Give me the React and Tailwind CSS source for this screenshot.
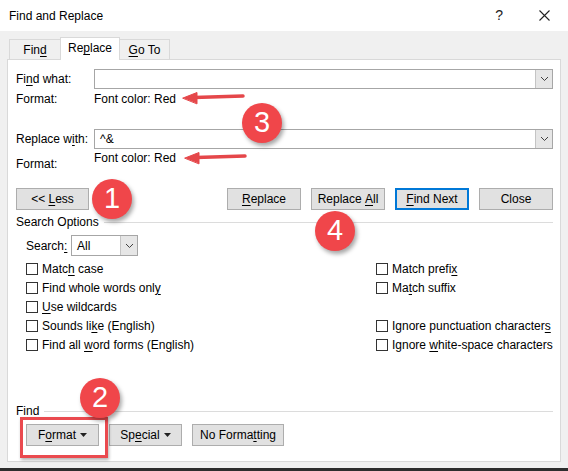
import React from "react";

const font = { fontFamily: '"Liberation Sans", Arial, sans-serif' };

const U = ({ children }) => <span className="underline underline-offset-2">{children}</span>;

const Chevron = () => (
  <svg width="9" height="6" viewBox="0 0 9 6" fill="none">
    <path d="M1 1 L4.5 4.5 L8 1" stroke="#404040" strokeWidth="1" />
  </svg>
);

const Combo = ({ value, className = "" }) => (
  <div className={`flex h-[20px] border border-[#a6a6a6] bg-white ${className}`}>
    <div className="flex flex-1 items-center pl-[5px] leading-none">{value}</div>
    <div className="flex w-[17px] items-center justify-center border-l border-[#c4c4c4] bg-[#e6e6e6]">
      <Chevron />
    </div>
  </div>
);

const Button = ({ children, className = "w-[74px]", primary }) => (
  <div
    className={`flex h-[22px] items-center justify-center bg-[#e1e1e1] ${
      primary ? "border-2 border-[#0078d7]" : "border border-[#adadad]"
    } ${className}`}
  >
    <span className="flex items-center whitespace-pre">{children}</span>
  </div>
);

const Check = ({ children }) => (
  <div className="flex h-[19px] items-center gap-[4px]">
    <div className="h-[12px] w-[12px] border border-[#333] bg-white" />
    <span>{children}</span>
  </div>
);

const Caret = () => (
  <svg width="7" height="4" viewBox="0 0 7 4" className="ml-[4px]">
    <path d="M0 0 L7 0 L3.5 4 Z" fill="#222" />
  </svg>
);

const Badge = ({ n, className }) => (
  <div
    className={`absolute flex h-[40px] w-[40px] items-center justify-center rounded-full bg-[#f0464a] text-[29px] text-white shadow-[2px_3px_4px_rgba(0,0,0,0.35)] ${className}`}
    style={font}
  >
    {n}
  </div>
);

export default function App() {
  return (
    <div
      className="relative flex h-[471px] w-[568px] flex-col overflow-hidden border-b-[3px] border-[#2d2d2d] bg-[#f0f0f0] text-[12px] text-black"
      style={font}
    >
      {/* title bar */}
      <div className="flex h-[31px] items-center bg-white pl-[9px]">
        <span className="text-[12px]">Find and Replace</span>
        <span className="ml-auto mr-[36px] text-[14px] text-[#222]">?</span>
        <svg width="11" height="11" viewBox="0 0 11 11" className="mr-[18px]">
          <path d="M0.5 0.5 L10.5 10.5 M10.5 0.5 L0.5 10.5" stroke="#222" strokeWidth="1.1" />
        </svg>
      </div>

      {/* tabs */}
      <div className="flex h-[28px] items-end pl-[9px]">
        <div className="flex h-[20px] w-[51px] items-center justify-center border border-b-0 border-r-0 border-[#d9d9d9]">
          <span>
            Fin<U>d</U>
          </span>
        </div>
        <div className="relative z-10 -mb-px flex h-[23px] w-[60px] items-center justify-center border border-b-0 border-[#d9d9d9] bg-white pb-[2px]">
          <span>
            Re<U>p</U>lace
          </span>
        </div>
        <div className="flex h-[20px] w-[50px] items-center justify-center border border-b-0 border-l-0 border-[#d9d9d9]">
          <span>
            <U>G</U>o To
          </span>
        </div>
      </div>

      {/* panel */}
      <div className="mx-[7px] flex h-[403px] flex-col border border-[#d9d9d9] bg-white pl-[8px] pr-[7px]">
        <div className="mt-[9px] flex h-[20px] items-center">
          <span className="w-[78px]">
            Fi<U>n</U>d what:
          </span>
          <Combo className="flex-1" />
        </div>
        <div className="flex h-[20px] items-center">
          <span className="w-[78px]">Format:</span>
          <span>Font color: Red</span>
        </div>

        <div className="mt-[20px] flex h-[20px] items-center">
          <span className="w-[78px]">
            Replace w<U>i</U>th:
          </span>
          <Combo className="flex-1" value="^&" />
        </div>
        <div className="mt-[1px] flex items-start leading-[16px]">
          <span className="w-[78px] pt-[6px]">Format:</span>
          <span>Font color: Red</span>
        </div>

        <div className="mt-[16px] flex items-center">
          <Button className="w-[73px]">
            {"<< "}
            <U>L</U>ess
          </Button>
          <div className="ml-auto flex gap-[10px]">
            <Button>
              <U>R</U>eplace
            </Button>
            <Button>
              {"Replace "}
              <U>A</U>ll
            </Button>
            <Button primary>
              <U>F</U>ind Next
            </Button>
            <Button>Close</Button>
          </div>
        </div>

        <div className="mt-[4px] flex h-[16px] items-center">
          <span>Search Options</span>
          <div className="ml-[5px] h-px flex-1 bg-[#dcdcdc]" />
        </div>

        <div className="mt-[5px] flex items-center pl-[10px]">
          <span className="w-[45px]">
            Search<U>:</U>
          </span>
          <Combo className="h-[21px] w-[67px]" value="All" />
        </div>

        <div className="mt-[3px] grid grid-cols-[350px_1fr] pl-[10px]">
          <div className="flex flex-col">
            <Check>
              Matc<U>h</U> case
            </Check>
            <Check>
              Find whole words onl<U>y</U>
            </Check>
            <Check>
              <U>U</U>se wildcards
            </Check>
            <Check>
              Sounds li<U>k</U>e (English)
            </Check>
            <Check>
              Find all <U>w</U>ord forms (English)
            </Check>
          </div>
          <div className="flex flex-col">
            <Check>
              Match prefi<U>x</U>
            </Check>
            <Check>
              Ma<U>t</U>ch suffix
            </Check>
            <div className="h-[19px]" />
            <Check>
              Ignore punctuation character<U>s</U>
            </Check>
            <Check>
              Ignore <U>w</U>hite-space characters
            </Check>
          </div>
        </div>

        <div className="mt-[49px] flex h-[16px] items-center">
          <span>Find</span>
          <div className="ml-[5px] h-px flex-1 bg-[#dcdcdc]" />
        </div>

        <div className="mt-[5px] flex items-center gap-[10px] pl-[10px]">
          <Button className="h-[21px] w-[73px]">
            F<U>o</U>rmat
            <Caret />
          </Button>
          <Button className="h-[21px] w-[73px]">
            Sp<U>e</U>cial
            <Caret />
          </Button>
          <Button className="h-[21px] w-[92px]">
            No Forma<U>t</U>ting
          </Button>
        </div>
      </div>

      {/* annotations */}
      <svg className="pointer-events-none absolute left-0 top-0" width="568" height="471">
        <g fill="#e5474a" stroke="#e5474a" strokeLinecap="round">
          <line x1="194" y1="97.5" x2="243" y2="96" strokeWidth="3.5" />
          <path d="M183 98 L197 92.5 L197 103.5 Z" strokeWidth="1" strokeLinejoin="round" />
          <line x1="196" y1="157.5" x2="245" y2="156" strokeWidth="3.5" />
          <path d="M185 158 L199 152.5 L199 163.5 Z" strokeWidth="1" strokeLinejoin="round" />
        </g>
      </svg>
      <div className="pointer-events-none absolute left-[20px] top-[417px] h-[41px] w-[88px] border-[3px] border-[#ea4a4f] shadow-[1px_2px_3px_rgba(0,0,0,0.3)]" />
      <Badge n="1" className="left-[92px] top-[179px]" />
      <Badge n="3" className="left-[242px] top-[103px]" />
      <Badge n="4" className="left-[315px] top-[211px]" />
      <Badge n="2" className="left-[80px] top-[378px]" />
    </div>
  );
}
